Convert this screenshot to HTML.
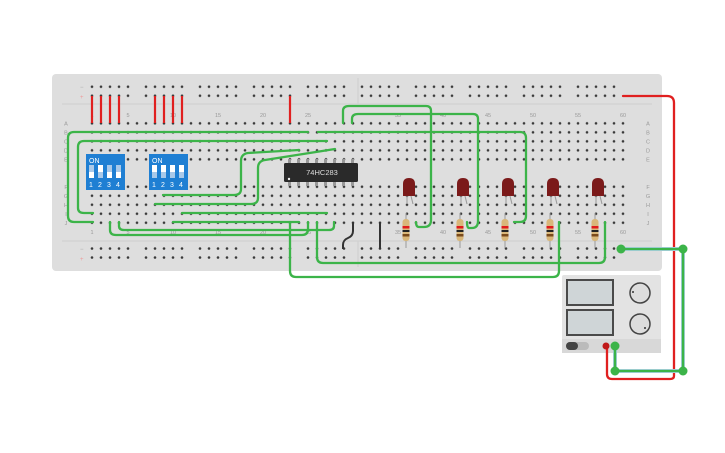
<!DOCTYPE html>
<html><head><meta charset="utf-8"><style>
html,body{margin:0;padding:0;background:#fff;width:725px;height:453px;overflow:hidden}
svg{display:block}
text{font-family:"Liberation Sans",sans-serif}
</style></head><body>
<svg width="725" height="453" viewBox="0 0 725 453" xmlns="http://www.w3.org/2000/svg">
<defs>
<pattern id="h" x="87.5" y="118.8" width="9" height="9" patternUnits="userSpaceOnUse"><circle cx="4.5" cy="4.5" r="1.3" fill="#3a3a3a"/></pattern>
<pattern id="hb" x="87.5" y="182.2" width="9" height="9" patternUnits="userSpaceOnUse"><circle cx="4.5" cy="4.5" r="1.3" fill="#3a3a3a"/></pattern>
<pattern id="r" x="87.5" y="82.2" width="54" height="9" patternUnits="userSpaceOnUse"><g fill="#3a3a3a"><circle cx="4.5" cy="4.5" r="1.3"/><circle cx="13.5" cy="4.5" r="1.3"/><circle cx="22.5" cy="4.5" r="1.3"/><circle cx="31.5" cy="4.5" r="1.3"/><circle cx="40.5" cy="4.5" r="1.3"/></g></pattern>
<pattern id="rb" x="87.5" y="244" width="54" height="9" patternUnits="userSpaceOnUse"><g fill="#3a3a3a"><circle cx="4.5" cy="4.5" r="1.3"/><circle cx="13.5" cy="4.5" r="1.3"/><circle cx="22.5" cy="4.5" r="1.3"/><circle cx="31.5" cy="4.5" r="1.3"/><circle cx="40.5" cy="4.5" r="1.3"/></g></pattern>
</defs>
<rect x="52" y="74" width="610" height="197" rx="4" fill="#dedede"/>
<line x1="62" y1="104" x2="652" y2="104" stroke="#cfcfcf"/>
<line x1="62" y1="241" x2="652" y2="241" stroke="#cfcfcf"/>
<line x1="358" y1="78" x2="358" y2="104" stroke="#cfcfcf"/>
<line x1="358" y1="241" x2="358" y2="267" stroke="#cfcfcf"/>
<rect x="87.5" y="82.2" width="540" height="18" fill="url(#r)"/>
<rect x="87.5" y="244" width="540" height="18" fill="url(#rb)"/>
<rect x="87.5" y="118.8" width="540" height="45" fill="url(#h)"/>
<rect x="87.5" y="182.2" width="540" height="45" fill="url(#hb)"/>
<g fill="#aaa" font-size="6">
<text x="80" y="89">−</text><text x="80" y="99" fill="#e99">+</text>
<text x="80" y="251">−</text><text x="80" y="261" fill="#e99">+</text>
</g>
<g fill="#999" font-size="5.5" text-anchor="middle">
<text x="128" y="117">5</text><text x="173" y="117">10</text><text x="218" y="117">15</text><text x="263" y="117">20</text><text x="308" y="117">25</text><text x="398" y="117">35</text><text x="443" y="117">40</text><text x="488" y="117">45</text><text x="533" y="117">50</text><text x="578" y="117">55</text><text x="623" y="117">60</text>
<text x="92" y="234">1</text><text x="128" y="234">5</text><text x="173" y="234">10</text><text x="218" y="234">15</text><text x="263" y="234">20</text><text x="308" y="234">25</text><text x="398" y="234">35</text><text x="443" y="234">40</text><text x="488" y="234">45</text><text x="533" y="234">50</text><text x="578" y="234">55</text><text x="623" y="234">60</text>
<text x="92" y="117">1</text>
</g>
<g fill="#999" font-size="5.5" text-anchor="middle">
<text x="66" y="125.5">A</text><text x="66" y="134.5">B</text><text x="66" y="143.5">C</text><text x="66" y="152.5">D</text><text x="66" y="161.5">E</text><text x="66" y="189">F</text><text x="66" y="198">G</text><text x="66" y="207">H</text><text x="66" y="216">I</text><text x="66" y="225">J</text>
<text x="648" y="125.5">A</text><text x="648" y="134.5">B</text><text x="648" y="143.5">C</text><text x="648" y="152.5">D</text><text x="648" y="161.5">E</text><text x="648" y="189">F</text><text x="648" y="198">G</text><text x="648" y="207">H</text><text x="648" y="216">I</text><text x="648" y="225">J</text>
</g>
<!-- red top wires -->
<g stroke="#e02020" stroke-width="2.2">
<line x1="92" y1="96" x2="92" y2="123"/><line x1="101" y1="96" x2="101" y2="123"/><line x1="110" y1="96" x2="110" y2="123"/><line x1="119" y1="96" x2="119" y2="123"/>
<line x1="155" y1="96" x2="155" y2="123"/><line x1="164" y1="96" x2="164" y2="123"/><line x1="173" y1="96" x2="173" y2="123"/><line x1="182" y1="96" x2="182" y2="123"/>
<line x1="290" y1="96" x2="290" y2="123"/>
</g>
<!-- DIP switches -->
<g>
<rect x="86" y="154" width="39" height="36" fill="#1f7fd3"/>
<rect x="149" y="154" width="39" height="36" fill="#1f7fd3"/>
<g fill="#fff" font-size="7"><text x="89" y="163">ON</text><text x="152" y="163">ON</text>
<text x="89" y="187">1</text><text x="98" y="187">2</text><text x="107" y="187">3</text><text x="116" y="187">4</text>
<text x="152" y="187">1</text><text x="161" y="187">2</text><text x="170" y="187">3</text><text x="179" y="187">4</text></g>
<g fill="#a9c9e9"><rect x="89" y="165" width="5" height="13"/><rect x="98" y="165" width="5" height="13"/><rect x="107" y="165" width="5" height="13"/><rect x="116" y="165" width="5" height="13"/>
<rect x="152" y="165" width="5" height="13"/><rect x="161" y="165" width="5" height="13"/><rect x="170" y="165" width="5" height="13"/><rect x="179" y="165" width="5" height="13"/></g>
<g fill="#fff"><rect x="89" y="172" width="5" height="6"/><rect x="98" y="165" width="5" height="7"/><rect x="107" y="172" width="5" height="6"/><rect x="116" y="172" width="5" height="6"/>
<rect x="152" y="165" width="5" height="7"/><rect x="161" y="165" width="5" height="7"/><rect x="170" y="165" width="5" height="7"/><rect x="179" y="165" width="5" height="7"/></g>
</g>
<!-- chip -->
<g fill="#999"><rect x="288" y="159" width="3" height="4"/><rect x="297" y="159" width="3" height="4"/><rect x="306" y="159" width="3" height="4"/><rect x="315" y="159" width="3" height="4"/><rect x="324" y="159" width="3" height="4"/><rect x="333" y="159" width="3" height="4"/><rect x="342" y="159" width="3" height="4"/><rect x="351" y="159" width="3" height="4"/>
<rect x="288" y="182" width="3" height="4"/><rect x="297" y="182" width="3" height="4"/><rect x="306" y="182" width="3" height="4"/><rect x="315" y="182" width="3" height="4"/><rect x="324" y="182" width="3" height="4"/><rect x="333" y="182" width="3" height="4"/><rect x="342" y="182" width="3" height="4"/><rect x="351" y="182" width="3" height="4"/></g>
<rect x="284" y="163" width="74" height="19" rx="1.5" fill="#2a2a2a"/>
<circle cx="289" cy="179" r="1.2" fill="#eee"/>
<text x="322" y="175" fill="#ddd" font-size="7.5" text-anchor="middle" font-family="Liberation Mono">74HC283</text>
<!-- green wires -->
<g fill="none" stroke="#3cb449" stroke-width="2.3" stroke-linecap="round">
<path d="M308 132 H74 Q68 132 68 138 V216 Q68 222 74 222 H93"/>
<path d="M327 141 H84 Q78 141 78 147 V208 Q78 213 84 213 H93"/>
<path d="M299 150 L248 153 Q241 154 241 161 V189 Q241 195 234 195 H163"/>
<path d="M335 149 L265 160 Q258 161 258 168 V198 Q258 204 251 204 H155"/>
<path d="M182 213 H327"/>
<path d="M173 222 H299"/>
<path d="M110 222 V230 Q110 235 116 235 H302 Q308 235 308 229 V222"/>
<path d="M119 222 V226 Q119 230 124 230 H329 Q334 230 334 226 V222"/>
<path d="M290 222 V271 Q290 277 296 277 H553 Q559 277 559 271 V222"/>
<path d="M317 222 V257 Q317 263 323 263 H599 Q605 263 605 257 V222"/>
<path d="M343 123 V111 Q343 106 349 106 H426 Q431 106 431 111 V220 Q431 227 424 227 H419 Q416 227 416 222"/>
<path d="M352 123 V119 Q352 114 358 114 H473 Q478 114 478 119 V221 Q478 228 472 228 H469 Q467 228 467 222"/>
<path d="M318 132 H520 Q526 132 526 138 V216 Q526 222 520 222 H514"/>
</g>
<!-- black wires -->
<path d="M353 222 V231 Q353 236 348 238 Q343 240 343 245 V249" fill="none" stroke="#333" stroke-width="2"/>
<line x1="380" y1="222" x2="380" y2="249" stroke="#333" stroke-width="2"/>
<!-- LEDs + resistors -->
<g id="led">
</g>
<g>
<g transform="translate(409,0)"><path d="M-6 196 V184 Q-6 178 0 178 Q6 178 6 184 V196 Z" fill="#7b1a1a"/><line x1="-2" y1="196" x2="-2" y2="204" stroke="#999"/><line x1="2" y1="196" x2="4" y2="204" stroke="#999"/></g>
<g transform="translate(463,0)"><path d="M-6 196 V184 Q-6 178 0 178 Q6 178 6 184 V196 Z" fill="#7b1a1a"/><line x1="-2" y1="196" x2="-2" y2="204" stroke="#999"/><line x1="2" y1="196" x2="4" y2="204" stroke="#999"/></g>
<g transform="translate(508,0)"><path d="M-6 196 V184 Q-6 178 0 178 Q6 178 6 184 V196 Z" fill="#7b1a1a"/><line x1="-2" y1="196" x2="-2" y2="204" stroke="#999"/><line x1="2" y1="196" x2="4" y2="204" stroke="#999"/></g>
<g transform="translate(553,0)"><path d="M-6 196 V184 Q-6 178 0 178 Q6 178 6 184 V196 Z" fill="#7b1a1a"/><line x1="-2" y1="196" x2="-2" y2="204" stroke="#999"/><line x1="2" y1="196" x2="4" y2="204" stroke="#999"/></g>
<g transform="translate(598,0)"><path d="M-6 196 V184 Q-6 178 0 178 Q6 178 6 184 V196 Z" fill="#7b1a1a"/><line x1="-2" y1="196" x2="-2" y2="204" stroke="#999"/><line x1="2" y1="196" x2="4" y2="204" stroke="#999"/></g>
</g>
<g>
<g transform="translate(406,0)"><line x1="0" y1="213" x2="0" y2="248" stroke="#999"/><rect x="-3.5" y="219" width="7" height="22" rx="3" fill="#d9b77a"/><rect x="-3.5" y="226" width="7" height="2.5" fill="#e01b1b"/><rect x="-3.5" y="230" width="7" height="2" fill="#222"/><rect x="-3.5" y="234" width="7" height="2.5" fill="#7a4a1a"/></g>
<g transform="translate(460,0)"><line x1="0" y1="213" x2="0" y2="248" stroke="#999"/><rect x="-3.5" y="219" width="7" height="22" rx="3" fill="#d9b77a"/><rect x="-3.5" y="226" width="7" height="2.5" fill="#e01b1b"/><rect x="-3.5" y="230" width="7" height="2" fill="#222"/><rect x="-3.5" y="234" width="7" height="2.5" fill="#7a4a1a"/></g>
<g transform="translate(505,0)"><line x1="0" y1="213" x2="0" y2="248" stroke="#999"/><rect x="-3.5" y="219" width="7" height="22" rx="3" fill="#d9b77a"/><rect x="-3.5" y="226" width="7" height="2.5" fill="#e01b1b"/><rect x="-3.5" y="230" width="7" height="2" fill="#222"/><rect x="-3.5" y="234" width="7" height="2.5" fill="#7a4a1a"/></g>
<g transform="translate(550,0)"><line x1="0" y1="213" x2="0" y2="248" stroke="#999"/><rect x="-3.5" y="219" width="7" height="22" rx="3" fill="#d9b77a"/><rect x="-3.5" y="226" width="7" height="2.5" fill="#e01b1b"/><rect x="-3.5" y="230" width="7" height="2" fill="#222"/><rect x="-3.5" y="234" width="7" height="2.5" fill="#7a4a1a"/></g>
<g transform="translate(595,0)"><line x1="0" y1="213" x2="0" y2="248" stroke="#999"/><rect x="-3.5" y="219" width="7" height="22" rx="3" fill="#d9b77a"/><rect x="-3.5" y="226" width="7" height="2.5" fill="#e01b1b"/><rect x="-3.5" y="230" width="7" height="2" fill="#222"/><rect x="-3.5" y="234" width="7" height="2.5" fill="#7a4a1a"/></g>
</g>
<!-- power supply -->
<rect x="562" y="275" width="99" height="78" rx="2" fill="#e3e3e3"/>
<rect x="562" y="339" width="99" height="14" fill="#d8d8d8"/>
<rect x="567" y="280" width="46" height="25" fill="#cfd5d7" stroke="#4a4a4a" stroke-width="2"/>
<rect x="567" y="310" width="46" height="25" fill="#cfd5d7" stroke="#4a4a4a" stroke-width="2"/>
<circle cx="640" cy="293" r="10" fill="#ddd" stroke="#444" stroke-width="1.5"/>
<circle cx="640" cy="324" r="10" fill="#ddd" stroke="#444" stroke-width="1.5"/>
<circle cx="633" cy="292" r="1" fill="#333"/><circle cx="645" cy="328" r="1" fill="#333"/>
<rect x="566" y="342" width="23" height="8" rx="4" fill="#bbb"/><rect x="566" y="342" width="12" height="8" rx="4" fill="#444"/>
<!-- power wires -->
<g fill="none" stroke-linecap="round">
<path d="M623 96 H667 Q674 96 674 103 V376 Q674 379 670 379 H612 Q607 379 607 374 V346" stroke="#e02020" stroke-width="2.3"/>
<path d="M621 249 H683 V371 H615 V346" stroke="#a8cfe0" stroke-width="4"/>
<path d="M621 249 H683 V371 H615 V346" stroke="#3cb449" stroke-width="2.3"/>
</g>
<circle cx="606" cy="346" r="3.5" fill="#c01818"/>
<g fill="#3cb449"><circle cx="621" cy="249" r="4.5"/><circle cx="683" cy="249" r="4.5"/><circle cx="683" cy="371" r="4.5"/><circle cx="615" cy="371" r="4.5"/><circle cx="615" cy="346" r="4.5"/></g>
</svg>
</body></html>
